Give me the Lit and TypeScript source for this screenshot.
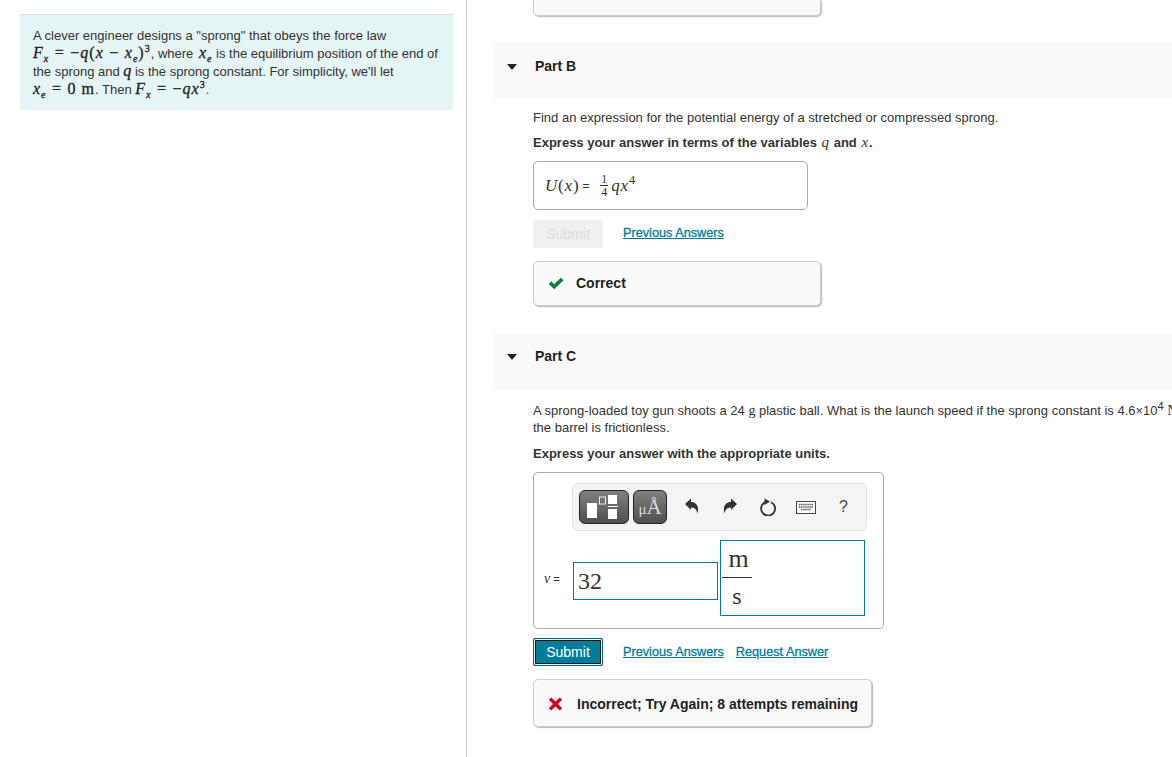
import { LitElement, html, css } from "lit";
import { customElement } from "lit/decorators.js";

@customElement("app-root")
export class AppRoot extends LitElement {
  static styles = css`
    :host { display: block; width: 1172px; height: 757px; overflow: hidden; background: #fff;
      font-family: "Liberation Sans", Arial, sans-serif; color: #333; font-size: 13px; }
    .page { display: flex; height: 757px; }
    .left { width: 466px; flex: none; border-right: 1px solid #c4d3e0; padding-top: 14px; }
    .intro { margin-left: 20px; width: 433px; height: 95px; border-top: 1px solid #ddd; background: #e5f5f6;
      font-size: 13px; line-height: 18px; color: #333; }
    .intro-in { padding: 12px 0 0 13px; white-space: nowrap; }
    .m { font-family: "Liberation Serif", serif; font-size: 16px; color: #222; line-height: 0; letter-spacing: 1px; -webkit-text-stroke: 0.3px #222; }
    .mg { margin: 0 0 0 2px; }
    .tight { letter-spacing: 0; }
    .o { margin: 0 4px; }
    .o1 { margin: 0 5.5px; }
    sub.s, sup.s { font-size: 10px; line-height: 0; }
    .right { flex: 1; min-width: 0; overflow: hidden; padding-left: 26px; }
    .inner { padding-left: 40px; }
    .card { box-sizing: border-box; background: #f9f9f9; border: 1px solid #ccc; border-radius: 5px;
      box-shadow: 1px 1px 1px #bbb; display: flex; align-items: center; font-weight: 700; font-size: 14px; color: #222; }
    .topcard { width: 288px; height: 16px; border-top: none; border-radius: 0 0 5px 5px; }
    .part { height: 56px; background: #f9f9f9; display: flex; align-items: flex-start; padding-top: 16px; box-sizing: border-box;
      font-weight: 700; font-size: 14px; color: #222; line-height: 14px; }
    .arrow { width: 0; height: 0; border-left: 5.5px solid transparent; border-right: 5.5px solid transparent; border-top: 6px solid #222;
      margin: 5px 18px 0 14px; }
    .p1 { margin-top: 27px; }
    .p2 { margin-top: 27px; }
    .para { font-size: 13px; line-height: 17px; color: #333; white-space: nowrap; }
    .para1 { margin-top: 10px; }
    .para2 { margin-top: 13px; }
    .g { font-family: "Liberation Serif", serif; font-size: 14px; }
    .ex { font-size: 11px; line-height: 0; }
    .b { font-weight: 700; font-size: 13px; line-height: 17px; color: #333; white-space: nowrap; margin-top: 8px; }
    .b2 { margin-top: 9px; }
    .b i { font-family: "Liberation Serif", serif; font-size: 15px; font-weight: 400; margin: 0 1px; }
    .ans { box-sizing: border-box; width: 275px; height: 49px; border: 1px solid #aaa; border-radius: 5px; margin-top: 10px;
      display: flex; align-items: center; padding-left: 11px; font-family: "Liberation Serif", serif; font-size: 17px; letter-spacing: 0.8px; color: #333; }
    .eq { font-family: "Liberation Sans", sans-serif; font-size: 12px; margin: 0 10px 0 3px; }
    .frac { display: inline-flex; flex-direction: column; align-items: center; font-size: 12px; line-height: 12px; margin-right: 3px; letter-spacing: 0; }
    .frac span:first-child { border-bottom: 1px solid #333; padding: 0 1px; }
    sup.e { font-size: 13px; line-height: 0; font-style: normal; }
    .actions { display: flex; align-items: center; margin-top: 10px; height: 28px; }
    .a2 { margin-top: 9px; }
    .btn { box-sizing: border-box; width: 70px; height: 28px; border-radius: 2px; display: flex; align-items: center; justify-content: center; font-size: 14px; }
    .btn.off { background: #f0f0f0; color: #ddd; }
    .btn.on { background: #007c9b; color: #fff; border-radius: 3px; box-shadow: inset 0 0 0 1px #00627b, inset 0 0 0 2px #e8f2f5, inset 0 0 0 3px #111; }
    a { color: #007c9b; text-decoration: underline; font-size: 12.7px; margin-top: -2px; -webkit-text-stroke: 0.3px #007c9b; }
    .a2 a { margin-top: 0; }
    .actions a:first-of-type { margin-left: 20px; }
    .actions a + a { margin-left: 12px; }
    .correct { width: 288px; height: 45px; margin-top: 13px; padding: 0 0 1px 14px; }
    .correct svg { margin-right: 12px; }
    .box { box-sizing: border-box; width: 351px; height: 157px; border: 1px solid #aaa; border-radius: 5px; margin-top: 10px;
      padding: 10px 0 0 38px; }
    .toolbar { box-sizing: border-box; width: 295px; height: 48px; background: #f4f4f4; border: 1px solid #e2e2e2; border-radius: 6px;
      display: flex; align-items: center; padding-left: 6px; }
    .tb { box-sizing: border-box; height: 34px; border: 1px solid #222; border-radius: 6px;
      background: linear-gradient(#808080, #4f4f4f); display: flex; align-items: center; justify-content: center; margin-right: 4px; }
    .t1 { width: 50px; }
    .t2 { width: 34px; font-family: "Liberation Serif", serif; color: #ddd; font-size: 21px; }
    .mu { font-size: 15px; margin-top: 4px; }
    .ic { width: 38px; display: flex; justify-content: center; align-items: center; color: #333; }
    .first { margin-left: 1.5px; }
    .up { margin-bottom: 2px; }
    .q { font-size: 16px; color: #444; }
    .row { display: flex; align-items: flex-start; margin: 9px 0 0 -28px; }
    .v { width: 29px; margin-top: 31px; font-family: "Liberation Sans", sans-serif; font-size: 11px; color: #333; height: 18px; white-space: nowrap; }
    .v i { margin-right: 3px; font-family: "Liberation Serif", serif; font-size: 14px; }
    .inp { box-sizing: border-box; border: 1px solid #007c9b; background: #fff; font-family: "Liberation Serif", serif; color: #333; }
    .val { width: 145px; height: 38px; margin-top: 22px; font-size: 24px; line-height: 36px; padding-left: 4px; }
    .unit { width: 145px; height: 76px; margin-left: 2px; font-size: 24px; padding-left: 1px; display: flex; }
    .uf { display: flex; flex-direction: column; align-items: center; width: 30px; line-height: 36px; }
    .uf span:first-child { box-sizing: border-box; padding-left: 3px; font-size: 26px; border-bottom: 1px solid #333; width: 100%; text-align: center; height: 37px; }
    .incorrect { width: 339px; height: 48px; margin-top: 13px; padding: 1px 0 0 14px; }
    .incorrect svg { margin-right: 14px; }
  `;

  render() {
    return html`<div class="page">
      <div class="left">
        <div class="intro"><div class="intro-in">
          A clever engineer designs a "sprong" that obeys the force law<br />
          <span class="m"><i>F<sub class="s">x</sub></i><span class="o1">=</span>−<i>q</i>(<i>x</i><span class="o1">−</span><i>x<sub class="s">e</sub></i>)<sup class="s">3</sup></span>, where <span class="m mg"><i>x<sub class="s">e</sub></i></span> is the equilibrium position of the end of<br />
          the sprong and <span class="m tight"><i>q</i></span> is the sprong constant. For simplicity, we'll let<br />
          <span class="m"><i>x<sub class="s">e</sub></i><span class="o1">=</span>0 m</span>. Then <span class="m"><i>F<sub class="s">x</sub></i><span class="o1">=</span>−<i>qx</i><sup class="s">3</sup></span>.
        </div></div>
      </div>
      <div class="right">
        <div class="inner"><div class="card topcard"></div></div>
        <div class="part p1"><span class="arrow"></span>Part B</div>
        <div class="inner">
          <div class="para para1">Find an expression for the potential energy of a stretched or compressed sprong.</div>
          <div class="b">Express your answer in terms of the variables <i>q</i> and <i>x</i>.</div>
          <div class="ans"><i>U</i><span>(</span><i>x</i><span>)</span><span class="eq">=</span><span class="frac"><span>1</span><span>4</span></span><span><i>qx</i><sup class="e">4</sup></span></div>
          <div class="actions"><div class="btn off">Submit</div><a>Previous Answers</a></div>
          <div class="card correct">
            <svg width="16" height="13" viewBox="0 0 15 12"><path d="M0.6 6.5 L3.2 4 L5.8 6.6 L12 0.6 L14.6 3 L5.8 11.4 Z" fill="#0b8043"/></svg>
            Correct
          </div>
        </div>
        <div class="part p2"><span class="arrow"></span>Part C</div>
        <div class="inner">
          <div class="para para2">A sprong-loaded toy gun shoots a 24 <span class="g">g</span> plastic ball. What is the launch speed if the sprong constant is 4.6×10<sup class="ex">4</sup> <span class="g">N/m</span><br />the barrel is frictionless.</div>
          <div class="b b2">Express your answer with the appropriate units.</div>
          <div class="box">
            <div class="toolbar">
              <div class="tb t1"><svg width="40" height="24" viewBox="0 0 40 24">
                <rect x="3" y="8" width="10" height="15" fill="#fff"/>
                <rect x="15.5" y="2" width="6" height="7" fill="none" stroke="#eee"/>
                <rect x="24" y="0" width="9" height="9" fill="#fff"/>
                <rect x="24" y="11" width="10" height="1" fill="#fff"/>
                <rect x="24" y="14" width="9" height="10" fill="#fff"/>
              </svg></div>
              <div class="tb t2"><span class="mu">μ</span>Å</div>
              <div class="ic first up"><svg width="16" height="16" viewBox="0 0 16 16"><path d="M1 6 L7 0.5 V4 C12 4 15.5 8 13.5 15.5 C12.5 11.5 11 9.5 7 9.5 V12 Z" fill="#333"/></svg></div>
              <div class="ic up"><svg width="16" height="16" viewBox="0 0 16 16"><path d="M15 6 L9 0.5 V4 C4 4 0.5 8 2.5 15.5 C3.5 11.5 5 9.5 9 9.5 V12 Z" fill="#333"/></svg></div>
              <div class="ic"><svg width="18" height="18" viewBox="0 0 18 18"><path d="M5.8 4.4 A7 7 0 1 0 12 4.2" fill="none" stroke="#333" stroke-width="1.8"/><path d="M5.5 0.5 L11 3.6 L5.5 7 Z" fill="#333"/></svg></div>
              <div class="ic"><svg width="20" height="13" viewBox="0 0 20 13"><rect x="0.5" y="0.5" width="19" height="12" fill="#fff" stroke="#444"/><path d="M3 3.5 H17 M3 6 H17 M5 8.5 H15" stroke="#555" stroke-width="1.4" stroke-dasharray="1.4 .7"/></svg></div>
              <div class="ic q">?</div>
            </div>
            <div class="row">
              <div class="v"><i>v</i>=</div>
              <div class="inp val">32</div>
              <div class="inp unit"><div class="uf"><span>m</span><span>s</span></div></div>
            </div>
          </div>
          <div class="actions a2"><div class="btn on">Submit</div><a>Previous Answers</a><a>Request Answer</a></div>
          <div class="card incorrect">
            <svg width="15" height="14" viewBox="0 0 15 14"><path d="M0.8 2.8 L3.2 0.6 L7.5 4.6 L11.8 0.6 L14.2 2.8 L10 7 L14.2 11.2 L11.8 13.4 L7.5 9.4 L3.2 13.4 L0.8 11.2 L5 7 Z" fill="#d6001c"/></svg>
            Incorrect; Try Again; 8 attempts remaining
          </div>
        </div>
      </div>
    </div>`;
  }
}
